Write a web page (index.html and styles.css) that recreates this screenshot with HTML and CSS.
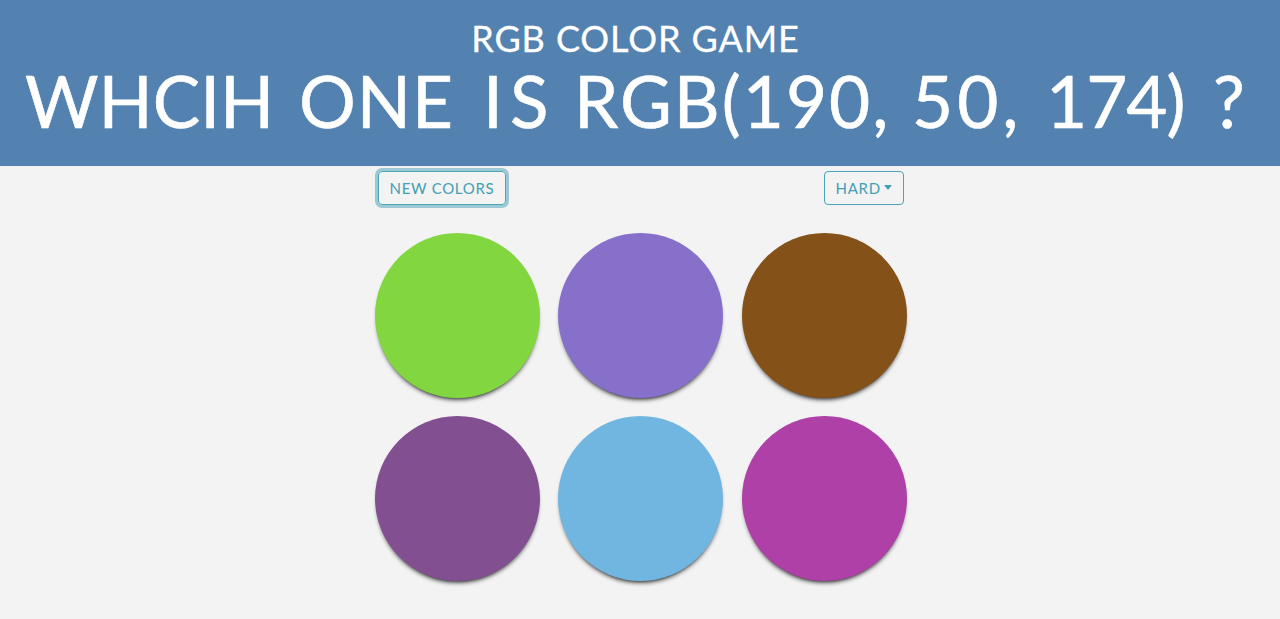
FILE: index.html
```html
<!DOCTYPE html>
<html lang="en">
<head>
    <meta charset="UTF-8">
    <meta name="viewport" content="width=device-width, initial-scale=1.0">
    <title>RGB Color Game</title>
    <link rel="stylesheet" href="styles.css">
</head>
<body>
    <header class="header">
        <h2 class="title">RGB Color Game</h2>
        <h1 class="question">
            <span class="which">Whcih</span>
            <span class="one">one</span>
            <span class="is">is</span>
            <span class="red">rgb(190,</span>
            <span class="grn">50,</span>
            <span class="blu">174)</span>
            <span class="mark">?</span>
        </h1>
    </header>
    <div class="controls">
        <button class="btn active" id="reset">New Colors</button>
        <button class="btn level">Hard <span class="caret"></span></button>
    </div>
    <div class="container">
        <div class="circle green"></div>
        <div class="circle violet"></div>
        <div class="circle brown"></div>
        <div class="circle plum"></div>
        <div class="circle sky"></div>
        <div class="circle magenta"></div>
    </div>
</body>
</html>
```
FILE: styles.css
```css
*{
    margin: 0;
    padding: 0;
    box-sizing: border-box;
}
body{
    height: 619px;
    background: #f3f3f3;
    font-family: Lato, sans-serif;
    text-transform: uppercase;
    overflow: hidden;
}
.header{
    height: 166px;
    padding-top: 17px;
    background: #5382b1;
    color: #fff;
    text-align: center;
}
.title{
    padding-right: 9px;
    font-size: 36px;
    font-weight: 400;
    line-height: 43px;
    letter-spacing: 0.9px;
    -webkit-text-stroke: 0.3px #fff;
}
.question{
    display: grid;
    grid-template-columns: 274px 184px 86px 343px 134px 167px auto;
    padding-left: 25px;
    font-size: 71px;
    font-weight: 400;
    line-height: 81px;
    text-align: left;
    white-space: nowrap;
    -webkit-text-stroke: 0.6px #fff;
}
.one{
    letter-spacing: 1px;
}
.is{
    letter-spacing: 7px;
}
.red{
    padding-left: 5px;
    letter-spacing: 2px;
}
.grn{
    letter-spacing: 4px;
}
.blu{
    letter-spacing: -1px;
}
.controls{
    width: 526px;
    height: 67px;
    margin: 0 auto;
    padding-top: 5px;
    display: flex;
    justify-content: space-between;
    align-items: flex-start;
    transform: translateX(1px);
}
.btn{
    width: 128px;
    height: 34px;
    border: 1px solid #4ba5b8;
    border-radius: 4px;
    background: transparent;
    color: #429fb5;
    font-family: inherit;
    font-size: 15px;
    letter-spacing: 0.7px;
    text-transform: uppercase;
    white-space: nowrap;
}
.btn.active{
    box-shadow: 0 0 0 3px #9bc8d3;
}
.level{
    width: 80px;
}
.caret{
    display: inline-block;
    margin-left: -1px;
    border-top: 5px solid;
    border-left: 4px solid transparent;
    border-right: 4px solid transparent;
    vertical-align: 4px;
}
.container{
    width: 532px;
    margin: 0 auto;
    padding-left: 1px;
    display: grid;
    grid-template-columns: repeat(3, 165px);
    gap: 18.4px;
}
.circle{
    height: 165px;
    border-radius: 50%;
    box-shadow: 0 4px 5px -3px #000;
}
.green{
    background: #82d640;
}
.violet{
    background: #8670ca;
}
.brown{
    background: #845119;
}
.plum{
    background: #825091;
}
.sky{
    background: #71b6e1;
}
.magenta{
    background: #ae40a7;
}
```
